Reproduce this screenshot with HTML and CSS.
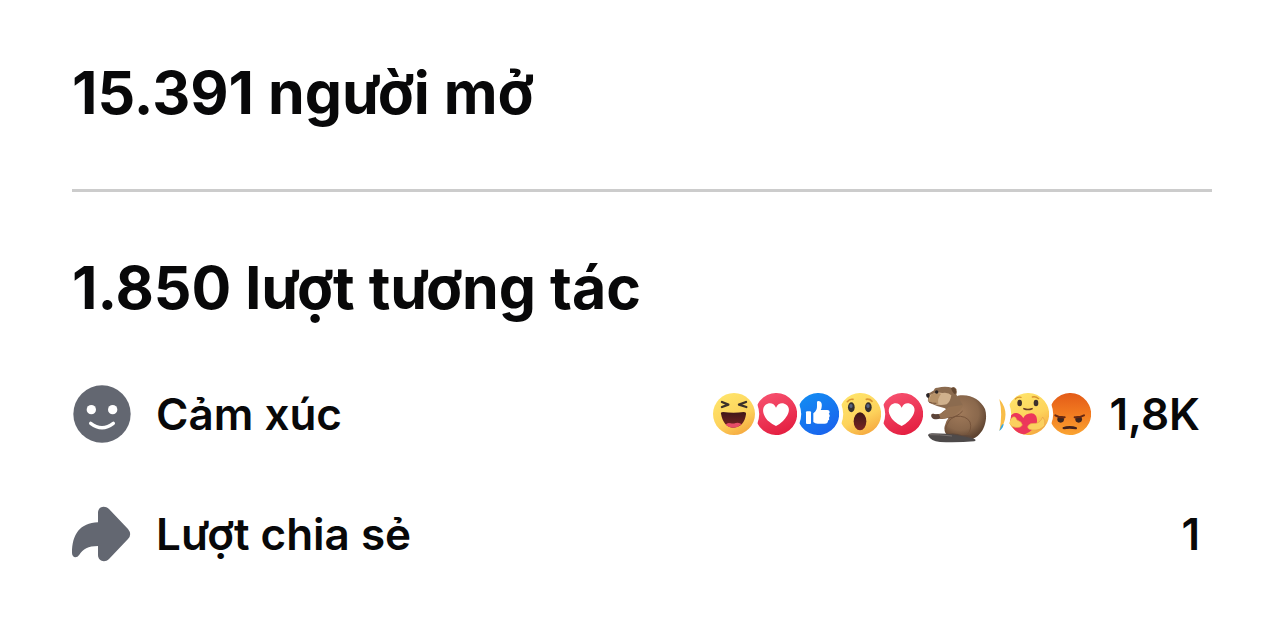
FILE: index.html
```html
<!DOCTYPE html>
<html lang="vi">
<head>
  <meta charset="UTF-8">
  <meta name="viewport" content="width=device-width, initial-scale=1.0">
  <title>Lượt tương tác</title>
  <link rel="stylesheet" href="styles.css">
</head>
<body>
  <svg class="defs" aria-hidden="true">
    <defs>
      <linearGradient id="yellow" x1="0.2" y1="0" x2="0.7" y2="1">
        <stop offset="0" stop-color="#ffe56b"/>
        <stop offset="0.6" stop-color="#fdd35c"/>
        <stop offset="1" stop-color="#f5a83f"/>
      </linearGradient>
      <linearGradient id="red" x1="0.2" y1="0" x2="0.6" y2="1">
        <stop offset="0" stop-color="#f75270"/>
        <stop offset="1" stop-color="#e41f41"/>
      </linearGradient>
      <linearGradient id="blue" x1="0.2" y1="0" x2="0.8" y2="1">
        <stop offset="0" stop-color="#138cf2"/>
        <stop offset="1" stop-color="#1a62ed"/>
      </linearGradient>
      <linearGradient id="orange" x1="0" y1="0" x2="0" y2="1">
        <stop offset="0" stop-color="#e35b18"/>
        <stop offset="0.5" stop-color="#f27b20"/>
        <stop offset="1" stop-color="#faa432"/>
      </linearGradient>
      <linearGradient id="mouth" x1="0" y1="0" x2="0" y2="1">
        <stop offset="0" stop-color="#3f1719"/>
        <stop offset="1" stop-color="#782422"/>
      </linearGradient>
      <radialGradient id="fur" cx="0.45" cy="0.4" r="0.6">
        <stop offset="0" stop-color="#a07a5a"/>
        <stop offset="0.65" stop-color="#8a684c"/>
        <stop offset="1" stop-color="#5f4431"/>
      </radialGradient>
      <clipPath id="bite">
        <path d="M7 35A63 63 0 1 1 7 91A75 75 0 0 0 7 35Z"/>
      </clipPath>
    </defs>
  </svg>

  <main class="insights">
    <section class="opens">
      <h2>15.391 người mở</h2>
    </section>
    <section class="interactions">
      <h2>1.850 lượt tương tác</h2>
      <div class="row">
        <svg class="icon" viewBox="0 0 180 180" aria-hidden="true">
          <circle cx="90" cy="90" r="86" fill="#636771"/>
          <circle cx="58" cy="77" r="14" fill="#fff"/>
          <circle cx="122" cy="77" r="14" fill="#fff"/>
          <path d="M56 118Q90 144 124 118" fill="none" stroke="#fff" stroke-width="10" stroke-linecap="round"/>
        </svg>
        <span class="label">Cảm xúc</span>
        <div class="reactions">
          <!-- haha -->
          <svg class="emoji" viewBox="0 0 126 126" aria-hidden="true">
            <circle cx="63" cy="63" r="63" fill="url(#yellow)"/>
            <path d="M27 27L46 35L27 42M99 27L78 35L100 42" fill="none" stroke="#3b3029" stroke-width="7" stroke-linecap="round" stroke-linejoin="round"/>
            <path d="M24 62Q22 57 30 57Q62 61 92 57Q100 57 99 64C96 88 82 104 62 104S28 87 24 62Z" fill="url(#mouth)"/>
            <path d="M38 95Q43 88 53 91Q61 93 68 90Q79 87 86 94Q75 104 62 104Q47 104 38 95Z" fill="#e64c68"/>
          </svg>
          <!-- love -->
          <svg class="emoji" viewBox="0 0 126 126" aria-hidden="true">
            <g clip-path="url(#bite)">
              <rect width="126" height="126" fill="url(#red)"/>
              <path d="M63 44C57 29 42 27 31 36C16 51 29 74 41 85Q52 95 63 99Q74 94 84 84C97 71 110 49 95 36C83 27 69 30 63 44Z" fill="#fff"/>
            </g>
          </svg>
          <!-- like -->
          <svg class="emoji" viewBox="0 0 126 126" aria-hidden="true">
            <g clip-path="url(#bite)">
              <rect width="126" height="126" fill="url(#blue)"/>
              <rect x="27" y="55" width="15" height="38" rx="3" fill="#fff"/>
              <path d="M49 61Q61 52 60 38V28Q60 24 64 24C73 24 77 33 73 47L71 51H91Q98 51 98 57Q98 60 95 63Q101 66 96 74Q99 80 93 83Q93 92 83 92H62Q54 92 49 87Z" fill="#fff"/>
            </g>
          </svg>
          <!-- wow -->
          <svg class="emoji" viewBox="0 0 126 126" aria-hidden="true">
            <g clip-path="url(#bite)">
              <rect width="126" height="126" fill="url(#yellow)"/>
              <path d="M25 26Q32 17 42 19M82 19Q92 17 99 25" fill="none" stroke="#d99531" stroke-width="5" stroke-linecap="round"/>
              <ellipse cx="37" cy="43" rx="10" ry="15" fill="#35302f"/>
              <ellipse cx="88" cy="43" rx="10" ry="15" fill="#35302f"/>
              <ellipse cx="36" cy="39" rx="5" ry="6" fill="#586481"/>
              <ellipse cx="87" cy="39" rx="5" ry="6" fill="#586481"/>
              <ellipse cx="63" cy="85" rx="19" ry="27" fill="url(#mouth)"/>
            </g>
          </svg>
          <!-- love -->
          <svg class="emoji" viewBox="0 0 126 126" aria-hidden="true">
            <g clip-path="url(#bite)">
              <rect width="126" height="126" fill="url(#red)"/>
              <path d="M62 44C56 29 41 27 30 36C15 51 28 74 40 85Q51 95 62 99Q73 94 83 84C96 71 109 49 94 36C82 27 68 30 62 44Z" fill="#fff"/>
            </g>
          </svg>
          <!-- beaver -->
          <svg class="beaver" viewBox="279 12 192 180" aria-hidden="true">
            <path d="M383 47C420 40 451 58 465 87C473 111 466 145 448 163Q437 177 419 178H371Q361 170 349 163Q341 153 344 139Q347 122 356 113Q340 119 328 116Q327 106 336 97L357 82Z" fill="url(#fur)"/>
            <path d="M291 45Q291 38 300 38L312 31Q313 22 323 23Q345 17 366 23Q372 18 379 27Q382 35 379 44Q389 56 398 75Q390 96 370 96Q350 94 345 85Q325 81 299 69Q291 62 294 55Z" fill="#8b6b4f"/>
            <path d="M300 45Q320 35 337 39Q355 36 364 46Q361 66 350 73Q329 79 301 69Q292 61 298 53Z" fill="#d0b18d"/>
            <path d="M304 43Q323 35 333 42Q321 57 325 71Q306 75 296 62Z" fill="#b69168"/>
            <path d="M288 44Q290 38 297 40Q301 47 295 54Q288 51 288 44Z" fill="#282327"/>
            <circle cx="320" cy="36" r="5" fill="#292323"/>
            <path d="M363 25Q371 19 377 28Q380 36 376 43Q369 42 363 25Z" fill="#654832"/>
            <path d="M297 66Q307 71 319 70" fill="none" stroke="#75523a" stroke-width="3"/>
            <path d="M398 75Q393 98 366 107Q346 116 329 116Q318 117 312 114Q302 111 305 102Q310 99 318 104Q325 104 336 98L356 81Z" fill="#967252"/>
            <path d="M304 105Q307 99 315 103L326 102L331 113Q323 121 309 116Q302 112 304 105Z" fill="#5c4439"/>
            <path d="M356 114Q380 113 397 94M346 151Q351 118 377 109Q409 106 420 126Q427 149 412 163" fill="none" stroke="#76543b" stroke-width="3" stroke-linecap="round"/>
            <path d="M352 163Q372 157 396 166Q424 163 431 176Q421 184 401 182L359 178Z" fill="#5d483c"/>
            <path d="M294 166Q295 159 309 160L350 161Q384 164 432 176Q441 180 433 184Q385 188 330 186Q302 184 294 166Z" fill="#4e4a4a"/>
            <path d="M299 164Q325 163 366 168" fill="none" stroke="#77706e" stroke-width="3"/>
          </svg>
          <!-- care, mostly covered by the beaver -->
          <svg class="sliver" viewBox="0 0 60 126" aria-hidden="true">
            <path d="M37 18Q74 63 37 114Q48 63 37 18Z" fill="#f8bd48"/>
            <path d="M37 114Q44 92 50 92Q50 103 37 114Z" fill="#35a7e5"/>
          </svg>
          <!-- care -->
          <svg class="emoji" viewBox="0 0 126 126" aria-hidden="true">
            <g clip-path="url(#bite)">
              <rect width="126" height="126" fill="url(#yellow)"/>
              <path d="M25 18Q32 11 42 13M76 12Q86 9 95 17" fill="none" stroke="#d99531" stroke-width="4" stroke-linecap="round"/>
              <ellipse cx="38" cy="30" rx="7" ry="10" fill="#3f302c"/>
              <ellipse cx="87" cy="30" rx="7" ry="10" fill="#3f302c"/>
              <path d="M51 47Q63 52 75 47" fill="none" stroke="#6a3c25" stroke-width="5" stroke-linecap="round"/>
              <path d="M49 75C36 54 15 56 9 73C4 92 20 111 40 126Q68 123 88 98C94 75 87 62 73 61Q55 62 49 75Z" fill="#ec375b"/>
              <path d="M16 73Q25 67 30 81Q45 86 46 96Q40 108 17 101Q4 95 5 85ZM107 72Q116 80 113 97Q101 114 75 111Q59 109 63 98Q69 89 87 91Q101 88 107 72Z" fill="#fbd05f" stroke="#e8a149" stroke-width="2"/>
            </g>
          </svg>
          <!-- angry -->
          <svg class="emoji" viewBox="0 0 126 126" aria-hidden="true">
            <g clip-path="url(#bite)">
              <rect width="126" height="126" fill="url(#orange)"/>
              <circle cx="35" cy="79" r="10" fill="#3e2620"/>
              <circle cx="89" cy="79" r="10" fill="#3e2620"/>
              <path d="M19 67Q31 74 47 73M105 67Q92 74 77 73" fill="none" stroke="#692913" stroke-width="6" stroke-linecap="round"/>
              <path d="M41 103Q62 95 83 103Q86 109 80 109Q62 105 45 109Q39 109 41 103Z" fill="#44221c"/>
            </g>
          </svg>
        </div>
        <span class="value">1,8K</span>
      </div>
      <div class="row">
        <svg class="icon" viewBox="0 0 180 180" aria-hidden="true">
          <path d="M78 55V26C78 8 98 3 111 15L168 75Q181 91 168 105L111 165C98 178 78 171 78 153V126C48 126 33 135 22 152C14 164 0 161 0 147C0 91 24 57 78 55Z" fill="#636771"/>
        </svg>
        <span class="label">Lượt chia sẻ</span>
        <span class="value">1</span>
      </div>
    </section>
  </main>
</body>
</html>
```
FILE: styles.css
```css
body {
  margin: 0;
  background-color: #fff;
  color: #080809;
  font-family: Inter, "Liberation Sans", sans-serif;
}

.defs {
  position: absolute;
  width: 0;
  height: 0;
}

.insights {
  padding: 0 72px;
}

.opens {
  padding: 61px 0 64px;
  border-bottom: 3px solid #ccc;
}

.interactions {
  padding: 64px 0 48px;
}

h2 {
  margin: 0;
  font-size: 59px;
  font-weight: 700;
  line-height: 64px;
}

.row {
  display: flex;
  align-items: center;
  margin-top: 60px;
  padding-right: 12px;
  font-size: 44px;
  font-weight: 600;
  line-height: 60px;
}

h2 + .row {
  margin-top: 64px;
}

.icon {
  width: 60px;
  height: 60px;
  margin-right: 24px;
}

.reactions {
  display: flex;
  align-items: center;
  margin-left: auto;
}

.label + .value {
  margin-left: auto;
}

.emoji {
  width: 42px;
  height: 42px;
}

.beaver {
  width: 64px;
  height: 60px;
}

.sliver {
  width: 20px;
  height: 42px;
}

.reactions + .value {
  margin-left: 18px;
}
```
